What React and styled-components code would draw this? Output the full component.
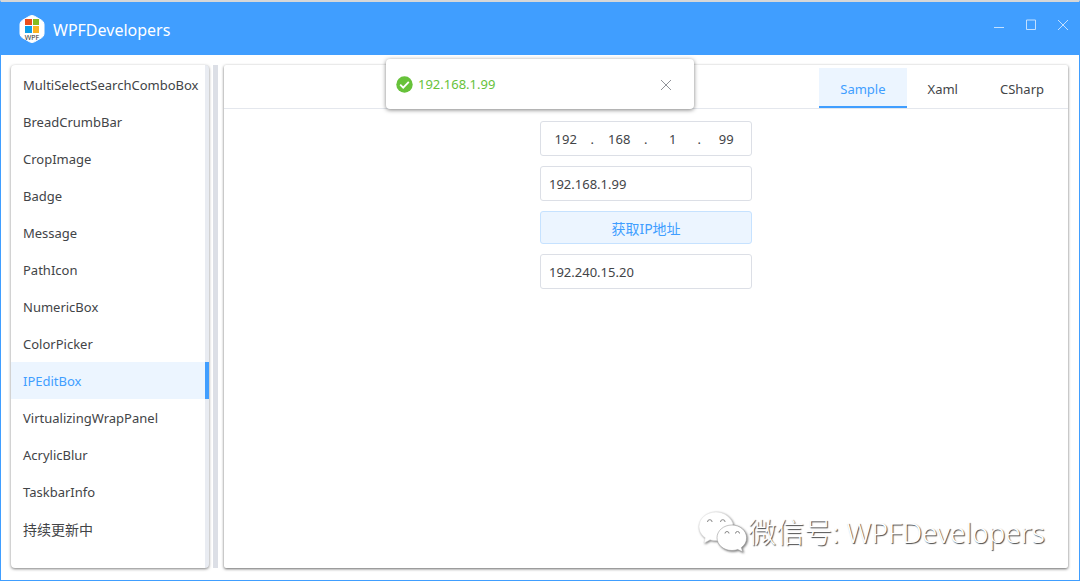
import React, { useState } from 'react'
import styled, { createGlobalStyle } from 'styled-components'

const GlobalStyle = createGlobalStyle`
  * {
    box-sizing: border-box;
  }
  body {
    margin: 0;
    background: #fff;
    color: #424447;
    font-family: 'Noto Sans', 'Noto Sans CJK SC', sans-serif;
    font-size: 13px;
  }
  button, input {
    font: inherit;
    color: inherit;
  }
`

const Window = styled.div`
  position: relative;
  display: flex;
  flex-direction: column;
  min-height: 100vh;
  border: 1px solid #409eff;
  border-top: 2px solid #d6d7d8;
`

const TitleBar = styled.header`
  display: flex;
  align-items: center;
  height: 53px;
  padding: 0 10px 0 17px;
  background: #409eff;
  color: #fff;
`

const AppTitle = styled.h1`
  flex: 1;
  margin: 3px 0 0 7px;
  font-size: 16px;
  font-weight: 400;
`

const WindowButtons = styled.div`
  display: flex;
  gap: 20px;
  margin-bottom: 8px;
`

const WindowButton = styled.button`
  display: flex;
  padding: 0;
  border: 0;
  background: none;
  color: #c3e0ff;
`

const Body = styled.div`
  flex: 1;
  display: flex;
  padding: 10px 11px 12px 10px;
`

const Sidebar = styled.nav`
  width: 198px;
  border-radius: 4px;
  overflow: hidden;
  background: linear-gradient(#e9ecf2, #e9ecf2) right / 4px 100% no-repeat #fff;
  box-shadow: 0 1px 3px rgba(0, 0, 0, 0.5);
`

const MenuList = styled.ul`
  margin: 0;
  padding: 1px 0 0;
  list-style: none;
`

const MenuLink = styled.a`
  display: block;
  height: 37px;
  padding: 1px 0 0 12px;
  border-right: 4px solid ${p => (p.$active ? '#409eff' : 'transparent')};
  background: ${p => (p.$active ? '#ecf5ff' : 'transparent')};
  color: ${p => (p.$active ? '#409eff' : 'inherit')};
  font-size: ${p => (p.$cjk ? '14px' : '13px')};
  line-height: 37px;
  white-space: nowrap;
  text-decoration: none;
`

const Splitter = styled.div`
  width: 5px;
  margin: 0 6px 0 4px;
  background: #dcdfe6;
`

const Content = styled.main`
  flex: 1;
  display: flex;
  flex-direction: column;
  border-radius: 2px;
  background: #fff;
  box-shadow: 0 1px 3px rgba(0, 0, 0, 0.6);
`

const Tabs = styled.div`
  display: flex;
  justify-content: flex-end;
  height: 44px;
  padding: 3px 3px 0 0;
  border-bottom: 1px solid #e4e7ed;
`

const Tab = styled.button`
  padding: 3px 21px 0;
  border: 0;
  border-bottom: 2px solid ${p => (p.$active ? '#409eff' : 'transparent')};
  background: ${p => (p.$active ? '#ecf5ff' : 'none')};
  color: ${p => (p.$active ? '#409eff' : 'inherit')};
`

const Form = styled.form`
  flex: 1;
  display: flex;
  flex-direction: column;
  gap: 10px;
  width: 212px;
  margin: 0 auto;
  padding-top: 12px;
`

const TextBox = styled.input`
  width: 100%;
  height: 35px;
  padding: 1px 8px 0;
  border: 1px solid #dcdfe6;
  border-radius: 3px;
  outline: none;
`

const IpBox = styled.div`
  display: flex;
  align-items: center;
  height: 35px;
  border: 1px solid #dcdfe6;
  border-radius: 3px;
`

const IpPart = styled.input`
  flex: 1;
  min-width: 0;
  padding: 0;
  border: 0;
  outline: none;
  background: none;
  text-align: center;
`

const Dot = styled.span`
  width: 4px;
`

const GetButton = styled.button`
  height: 33px;
  padding: 0;
  border: 1px solid #c6e2ff;
  border-radius: 3px;
  background: #ecf5ff;
  color: #409eff;
  font-size: 14px;
`

const Toast = styled.div`
  position: absolute;
  top: 57px;
  left: 50%;
  transform: translateX(-50%);
  display: flex;
  align-items: center;
  gap: 5px;
  width: 308px;
  height: 50px;
  padding: 0 22px 0 10px;
  border-radius: 4px;
  background: #fff;
  box-shadow: 0 1px 4px rgba(0, 0, 0, 0.5);
  color: #67c23a;
`

const ToastText = styled.span`
  flex: 1;
`

const CloseButton = styled.button`
  display: flex;
  padding: 2px 0 0;
  border: 0;
  background: none;
  color: #909399;
`

const Watermark = styled.div`
  position: absolute;
  right: 34px;
  bottom: 26px;
  display: flex;
  align-items: center;
  color: #fff;
  font-size: 28px;
  font-weight: 300;
  line-height: 42px;
  text-shadow: 1px 1px 1px #444;
  white-space: nowrap;
`

const WeChatIcon = styled.svg`
  overflow: visible;
  filter: drop-shadow(1px 1px 1px #777);
`

const menu = [
  'MultiSelectSearchComboBox',
  'BreadCrumbBar',
  'CropImage',
  'Badge',
  'Message',
  'PathIcon',
  'NumericBox',
  'ColorPicker',
  'IPEditBox',
  'VirtualizingWrapPanel',
  'AcrylicBlur',
  'TaskbarInfo',
  '持续更新中',
]

const tabs = ['Sample', 'Xaml', 'CSharp']

const Logo = () => (
  <svg width="28" height="28" viewBox="0 0 28 28">
    <path d="M11.5 1.2q2.5-1.4 5 0l7 4q2.5 1.4 2.5 4v9.6q0 2.6-2.5 4l-7 4q-2.5 1.4-5 0l-7-4q-2.5-1.4-2.5-4V9.2q0-2.6 2.5-4z" fill="#fff" stroke="#fff" />
    <path fill="#eb4f1b" d="M7 4h7v6H7z" />
    <path fill="#85bc1f" d="M15 4h6v6h-6z" />
    <path fill="#0f9fe8" d="M7 11h7v7H7z" />
    <path fill="#fbb324" d="M15 11h6v7h-6z" />
    <text x="14" y="25" textAnchor="middle" fontSize="7" fill="#333">WPF</text>
  </svg>
)

const Cross = () => (
  <svg width="12" height="12" viewBox="0 0 12 12" fill="none" stroke="currentColor">
    <path d="M1 1l10 10M11 1L1 11" />
  </svg>
)

const Check = () => (
  <svg width="17" height="17" viewBox="0 0 17 17">
    <circle cx="8.5" cy="8.5" r="8.2" fill="#67c23a" />
    <path d="M4.2 8.6l3 3 5.6-5.8" fill="none" stroke="#fff" strokeWidth="1.8" />
  </svg>
)

const WeChat = () => (
  <WeChatIcon width="50" height="44" viewBox="0 0 50 44">
    <g fill="#fff" stroke="#e2e2e2" strokeWidth="0.6">
      <path d="M18 2C8.5 2 1 8.500 1 16.500c0 5 2.500 8.500 6.200 11.200L6 33l6-3.200c2 .6 4 .9 7 .7h8L35 14C33 7 26 2 18 2z" />
      <path d="M34 15c-8.500 0-15 5.800-15 12.800S25.500 40.500 34 40.500c2 0 4-.4 5.800-1l5 2.500-1.400-4.500c3.400-2.300 5.200-5.700 5.200-9.700C48.600 20.800 42 15 34 15z" stroke="#999" />
    </g>
    <path d="M9.500 12a2.300 2.300 0 0 1 4.600 0M22.500 12a2.300 2.300 0 0 1 4.600 0M27 23.500a2 2 0 0 1 4 0M37.500 23.500a2 2 0 0 1 4 0" fill="none" stroke="#888" />
  </WeChatIcon>
)

const App = () => {
  const [active, setActive] = useState('IPEditBox')
  const [tab, setTab] = useState('Sample')
  const [toast, setToast] = useState(true)

  return (
    <Window>
      <GlobalStyle />
      <TitleBar>
        <Logo />
        <AppTitle>WPFDevelopers</AppTitle>
        <WindowButtons>
          <WindowButton aria-label="Minimize">
            <svg width="12" height="12" viewBox="0 0 12 12"><path d="M1 8.5h10" stroke="currentColor" /></svg>
          </WindowButton>
          <WindowButton aria-label="Maximize">
            <svg width="12" height="12" viewBox="0 0 12 12"><path d="M1.5 1h9v9.500h-9z" fill="none" stroke="currentColor" /></svg>
          </WindowButton>
          <WindowButton aria-label="Close"><Cross /></WindowButton>
        </WindowButtons>
      </TitleBar>

      <Body>
        <Sidebar>
          <MenuList>
            {menu.map(name => (
              <li key={name}>
                <MenuLink
                  href="#"
                  $active={name === active}
                  $cjk={name === '持续更新中'}
                  onClick={() => setActive(name)}
                >
                  {name}
                </MenuLink>
              </li>
            ))}
          </MenuList>
        </Sidebar>
        <Splitter />
        <Content>
          <Tabs role="tablist">
            {tabs.map(name => (
              <Tab key={name} role="tab" aria-selected={name === tab} $active={name === tab} onClick={() => setTab(name)}>{name}</Tab>
            ))}
          </Tabs>
          <Form onSubmit={e => e.preventDefault()}>
            <IpBox role="group" aria-label="IP">
              <IpPart aria-label="IP 1" defaultValue="192" />
              <Dot>.</Dot>
              <IpPart aria-label="IP 2" defaultValue="168" />
              <Dot>.</Dot>
              <IpPart aria-label="IP 3" defaultValue="1" />
              <Dot>.</Dot>
              <IpPart aria-label="IP 4" defaultValue="99" />
            </IpBox>
            <TextBox aria-label="IP text" defaultValue="192.168.1.99" />
            <GetButton type="button" onClick={() => setToast(true)}>获取IP地址</GetButton>
            <TextBox aria-label="Address" defaultValue="192.240.15.20" />
          </Form>
        </Content>
      </Body>

      {toast && (
        <Toast role="status">
          <Check />
          <ToastText>192.168.1.99</ToastText>
          <CloseButton aria-label="Close message" onClick={() => setToast(false)}><Cross /></CloseButton>
        </Toast>
      )}
      <Watermark>
        <WeChat />
        <span>微信号: WPFDevelopers</span>
      </Watermark>
    </Window>
  )
}

export default App
